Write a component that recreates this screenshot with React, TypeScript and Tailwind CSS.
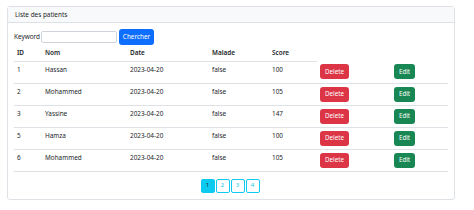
const patients = [
  { id: 1, nom: 'Hassan', date: '2023-04-20', malade: 'false', score: 100 },
  { id: 2, nom: 'Mohammed', date: '2023-04-20', malade: 'false', score: 105 },
  { id: 3, nom: 'Yassine', date: '2023-04-20', malade: 'false', score: 147 },
  { id: 5, nom: 'Hamza', date: '2023-04-20', malade: 'false', score: 100 },
  { id: 6, nom: 'Mohammed', date: '2023-04-20', malade: 'false', score: 105 },
];

export default function App() {
  return (
    <div
      className="w-[474px] h-[210px] bg-white pl-[7px] pt-[6px] text-[#212529] text-[6.4px] leading-[1.5]"
      style={{ fontFamily: '"Noto Sans", "Open Sans", Arial, sans-serif' }}
    >
      <div className="w-[448px] h-[194px] border border-[#dee2e6] rounded-[3px] flex flex-col">
        {/* entête */}
        <div className="h-[16px] bg-[#f8f9fa] border-b border-[#dee2e6] px-[7px] flex items-center">
          Liste des patients
        </div>

        <div className="px-[6px] pt-[6px]">
          <div className="flex items-center h-[16px]">
            <span>Keyword</span>
            <input className="ml-[1px] w-[76px] h-[12px] border border-[#ced4da] rounded-[2px] bg-white" />
            <button className="ml-[2px] h-[16px] w-[35px] bg-[#0d6efd] text-white rounded-[3px] text-[6.4px]">
              Chercher
            </button>
          </div>

          <table className="table-fixed border-collapse w-[434px]">
            <colgroup>
              <col className="w-[28px]" />
              <col className="w-[85px]" />
              <col className="w-[82px]" />
              <col className="w-[60px]" />
              <col className="w-[48px]" />
              <col className="w-[74px]" />
              <col className="w-[57px]" />
            </colgroup>
            <thead>
              <tr className="h-[16px] text-left">
                <th className="px-[3px] border-b border-[#dee2e6] font-semibold">ID</th>
                <th className="px-[3px] border-b border-[#dee2e6] font-semibold">Nom</th>
                <th className="px-[3px] border-b border-[#dee2e6] font-semibold">Date</th>
                <th className="px-[3px] border-b border-[#dee2e6] font-semibold">Malade</th>
                <th className="px-[3px] border-b border-[#dee2e6] font-semibold">Score</th>
              </tr>
            </thead>
            <tbody>
              {patients.map((p) => (
                <tr key={p.id} className="h-[22px] border-b border-[#dee2e6] align-top">
                  <td className="px-[3px] pt-[3px]">{p.id}</td>
                  <td className="px-[3px] pt-[3px]">{p.nom}</td>
                  <td className="px-[3px] pt-[3px]">{p.date}</td>
                  <td className="px-[3px] pt-[3px]">{p.malade}</td>
                  <td className="px-[3px] pt-[3px]">{p.score}</td>
                  <td className="px-[3px] pt-[3px]">
                    <button className="h-[15px] w-[29px] bg-[#dc3545] text-white rounded-[3px] text-[6.2px]">
                      Delete
                    </button>
                  </td>
                  <td className="px-[3px] pt-[3px]">
                    <button className="h-[15px] w-[21px] bg-[#198754] text-white rounded-[3px] text-[6.2px]">
                      Edit
                    </button>
                  </td>
                </tr>
              ))}
            </tbody>
          </table>

          <div className="flex justify-center gap-[1px] mt-[7px] ml-[-2px]">
            {[1, 2, 3, 4].map((n) => (
              <button
                key={n}
                className={
                  n === 1
                    ? 'w-[14px] h-[14px] rounded-[2px] border border-[#0dcaf0] bg-[#0dcaf0] text-[#212529] text-[6px]'
                    : 'w-[14px] h-[14px] rounded-[2px] border border-[#0dcaf0] bg-white text-[#0dcaf0] text-[6px]'
                }
              >
                {n}
              </button>
            ))}
          </div>
        </div>
      </div>
    </div>
  );
}
